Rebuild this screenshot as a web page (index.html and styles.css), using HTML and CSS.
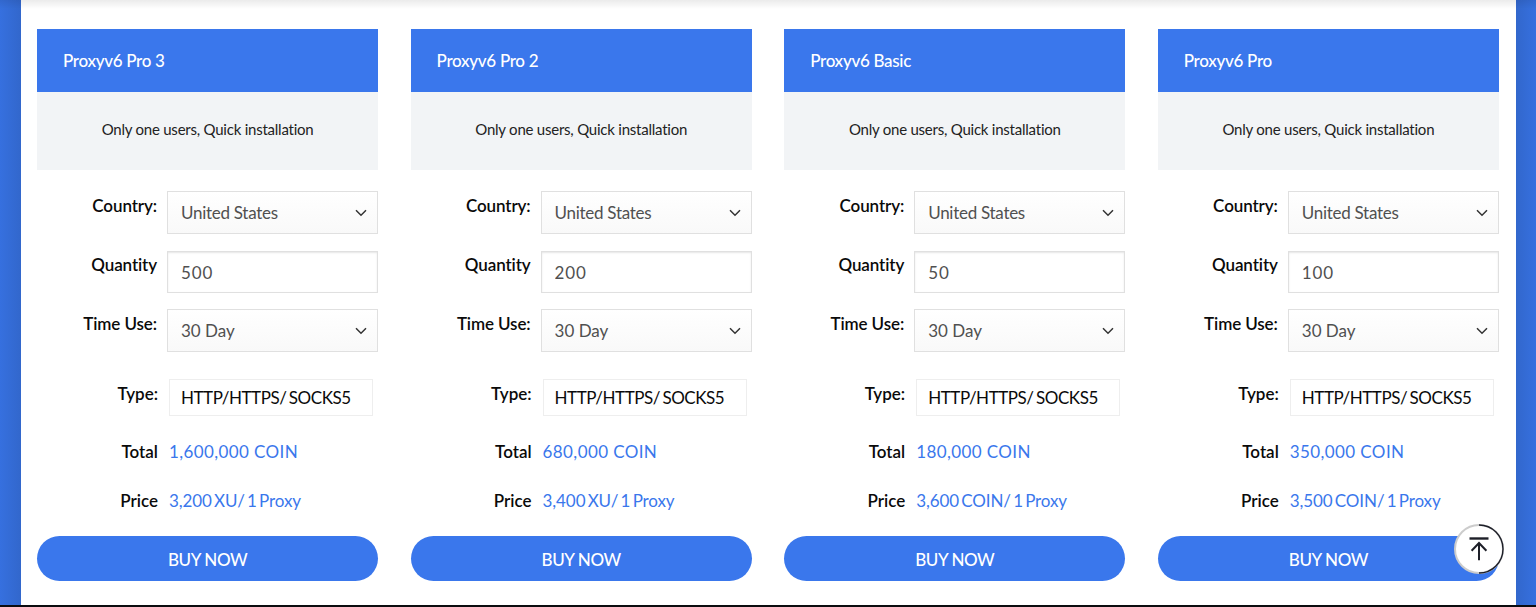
FILE: index.html
```html
<!DOCTYPE html>
<html lang="en">
<head>
    <meta charset="UTF-8">
    <meta name="viewport" content="width=device-width, initial-scale=1.0">
    <title>Proxyv6</title>
    <link rel="stylesheet" href="styles.css">
</head>
<body>
    <div class="container">
        <div class="card">
            <h3 class="card-title">Proxyv6 Pro 3</h3>
            <div class="card-desc">Only one users, Quick installation</div>
            <div class="row row-country">
                <label>Country:</label>
                <div class="select-box">
                    <select><option>United States</option></select>
                    <svg class="chevron" viewBox="0 0 12 8"><path d="M1 1.2 6 6.2 11 1.2"/></svg>
                </div>
            </div>
            <div class="row row-quantity">
                <label>Quantity</label>
                <input type="text" value="500">
            </div>
            <div class="row row-time">
                <label>Time Use:</label>
                <div class="select-box">
                    <select class="days"><option>30 Day</option></select>
                    <svg class="chevron" viewBox="0 0 12 8"><path d="M1 1.2 6 6.2 11 1.2"/></svg>
                </div>
            </div>
            <div class="info info-type"><b>Type:</b><span class="type">HTTP/HTTPS/ SOCKS5</span></div>
            <div class="info"><b>Total</b><span class="value">1,600,000 COIN</span></div>
            <div class="info info-price"><b>Price</b><span class="value">3,200 XU/ 1 Proxy</span></div>
            <button class="buy-button">BUY NOW</button>
        </div>

        <div class="card">
            <h3 class="card-title">Proxyv6 Pro 2</h3>
            <div class="card-desc">Only one users, Quick installation</div>
            <div class="row row-country">
                <label>Country:</label>
                <div class="select-box">
                    <select><option>United States</option></select>
                    <svg class="chevron" viewBox="0 0 12 8"><path d="M1 1.2 6 6.2 11 1.2"/></svg>
                </div>
            </div>
            <div class="row row-quantity">
                <label>Quantity</label>
                <input type="text" value="200">
            </div>
            <div class="row row-time">
                <label>Time Use:</label>
                <div class="select-box">
                    <select class="days"><option>30 Day</option></select>
                    <svg class="chevron" viewBox="0 0 12 8"><path d="M1 1.2 6 6.2 11 1.2"/></svg>
                </div>
            </div>
            <div class="info info-type"><b>Type:</b><span class="type">HTTP/HTTPS/ SOCKS5</span></div>
            <div class="info"><b>Total</b><span class="value">680,000 COIN</span></div>
            <div class="info info-price"><b>Price</b><span class="value">3,400 XU/ 1 Proxy</span></div>
            <button class="buy-button">BUY NOW</button>
        </div>

        <div class="card">
            <h3 class="card-title">Proxyv6 Basic</h3>
            <div class="card-desc">Only one users, Quick installation</div>
            <div class="row row-country">
                <label>Country:</label>
                <div class="select-box">
                    <select><option>United States</option></select>
                    <svg class="chevron" viewBox="0 0 12 8"><path d="M1 1.2 6 6.2 11 1.2"/></svg>
                </div>
            </div>
            <div class="row row-quantity">
                <label>Quantity</label>
                <input type="text" value="50">
            </div>
            <div class="row row-time">
                <label>Time Use:</label>
                <div class="select-box">
                    <select class="days"><option>30 Day</option></select>
                    <svg class="chevron" viewBox="0 0 12 8"><path d="M1 1.2 6 6.2 11 1.2"/></svg>
                </div>
            </div>
            <div class="info info-type"><b>Type:</b><span class="type">HTTP/HTTPS/ SOCKS5</span></div>
            <div class="info"><b>Total</b><span class="value">180,000 COIN</span></div>
            <div class="info info-price"><b>Price</b><span class="value">3,600 COIN/ 1 Proxy</span></div>
            <button class="buy-button">BUY NOW</button>
        </div>

        <div class="card">
            <h3 class="card-title">Proxyv6 Pro</h3>
            <div class="card-desc">Only one users, Quick installation</div>
            <div class="row row-country">
                <label>Country:</label>
                <div class="select-box">
                    <select><option>United States</option></select>
                    <svg class="chevron" viewBox="0 0 12 8"><path d="M1 1.2 6 6.2 11 1.2"/></svg>
                </div>
            </div>
            <div class="row row-quantity">
                <label>Quantity</label>
                <input type="text" value="100">
            </div>
            <div class="row row-time">
                <label>Time Use:</label>
                <div class="select-box">
                    <select class="days"><option>30 Day</option></select>
                    <svg class="chevron" viewBox="0 0 12 8"><path d="M1 1.2 6 6.2 11 1.2"/></svg>
                </div>
            </div>
            <div class="info info-type"><b>Type:</b><span class="type">HTTP/HTTPS/ SOCKS5</span></div>
            <div class="info"><b>Total</b><span class="value">350,000 COIN</span></div>
            <div class="info info-price"><b>Price</b><span class="value">3,500 COIN/ 1 Proxy</span></div>
            <button class="buy-button">BUY NOW</button>
        </div>
    </div>

    <div class="header-shadow"></div>
    <a class="back-to-top" href="#">
        <svg viewBox="0 0 50 50">
            <circle class="ring" cx="25" cy="25" r="24"/>
            <path class="progress" d="M25 1a24 24 0 0 1 0 48"/>
            <path class="arrow-bar" d="M15.5 14.5h19"/>
            <path class="arrow" d="M25 36.2V19M17.6 26.8 25 19l7.4 7.8"/>
        </svg>
    </a>
</body>
</html>
```

FILE: styles.css
```css
* {
    box-sizing: border-box;
}

body {
    margin: 0;
    height: 607px;
    overflow: hidden;
    padding: 0 20px 0 21px;
    font-family: Lato, sans-serif;
    font-size: 17px;
    font-variant-ligatures: none;
    color: #0a0a0a;
    background: linear-gradient(90deg, #3670df 0, #3267cc 21px, #3267cc 1516px, #3670df 1536px);
    border-bottom: 2px solid #0b0c0f;
}

.container {
    display: grid;
    grid-template-columns: repeat(4, 1fr);
    column-gap: 32.4px;
    height: 605px;
    padding: 29px 17px 0 16px;
    background: #fff;
}

.card-title {
    margin: 0;
    height: 63px;
    padding-left: 26px;
    line-height: 64px;
    font-size: 17px;
    font-weight: 500;
    letter-spacing: -0.3px;
    color: #fff;
    background: #3a77ec;
}

.card-desc {
    height: 77.5px;
    line-height: 75px;
    font-size: 15px;
    letter-spacing: -0.23px;
    text-align: center;
    color: #222;
    background: #f2f4f6;
}

.row {
    display: grid;
    grid-template-columns: 120px 1fr;
    column-gap: 10px;
}

.row label {
    padding-top: 4px;
    line-height: 22px;
    font-weight: 600;
    letter-spacing: -0.1px;
    text-align: right;
}

.row-country {
    margin-top: 21.5px;
}

.row-quantity {
    margin-top: 17px;
}

.row-quantity label {
    padding-top: 3px;
}

.row-time {
    margin-top: 16px;
}

.select-box {
    position: relative;
}

.select-box select,
.row input {
    display: block;
    width: 100%;
    height: 43px;
    padding: 0 13px;
    border: 1px solid #e0e0e0;
    border-radius: 0;
    font-family: inherit;
    font-size: 17px;
    color: #505050;
    appearance: none;
    background: #fff;
}

.select-box select {
    letter-spacing: -0.28px;
    background: linear-gradient(#fff, #f9f9f9);
}

.select-box .days {
    letter-spacing: 0;
}

.row input {
    height: 42px;
    letter-spacing: 0.9px;
    box-shadow: inset 0 1px 2px rgba(0, 0, 0, 0.1);
}

.chevron {
    position: absolute;
    top: 18px;
    right: 11px;
    width: 12px;
    height: 8px;
    fill: none;
    stroke: #333;
    stroke-width: 1.5;
}

.info {
    display: grid;
    grid-template-columns: 121px auto;
    justify-content: start;
    column-gap: 11px;
    height: 49px;
    line-height: 26px;
}

.info b {
    font-weight: 600;
    text-align: right;
}

.info-type {
    height: 60px;
    margin-top: 27px;
}

.info-type b {
    padding-top: 2px;
}

.type {
    width: 204px;
    height: 37px;
    padding-left: 11px;
    line-height: 35px;
    letter-spacing: -0.45px;
    word-spacing: -1.5px;
    border: 1px solid #eee;
    white-space: nowrap;
}

.value {
    letter-spacing: 0.4px;
    color: #3a77ec;
    white-space: nowrap;
}

.info-price .value {
    letter-spacing: -0.1px;
    word-spacing: -2px;
}

.buy-button {
    display: block;
    width: 100%;
    height: 45px;
    margin-top: -1px;
    padding-top: 2px;
    border: none;
    border-radius: 23px;
    font-family: inherit;
    font-size: 17px;
    font-weight: 500;
    letter-spacing: -0.4px;
    color: #fff;
    background: #3a77ec;
}

.header-shadow {
    position: absolute;
    top: 0;
    left: 0;
    width: 100%;
    height: 9px;
    background: linear-gradient(rgba(0, 0, 0, 0.08), rgba(0, 0, 0, 0));
}

.back-to-top {
    position: absolute;
    left: 1454px;
    top: 524px;
    width: 50px;
    height: 50px;
}

.back-to-top svg {
    display: block;
    fill: none;
    stroke: #1d1f28;
    stroke-width: 2;
}

.back-to-top .ring {
    fill: #fff;
    stroke: #ccc;
}

.back-to-top .progress {
    stroke-width: 1.4;
}

.back-to-top .arrow-bar {
    stroke-width: 2.4;
}
```
